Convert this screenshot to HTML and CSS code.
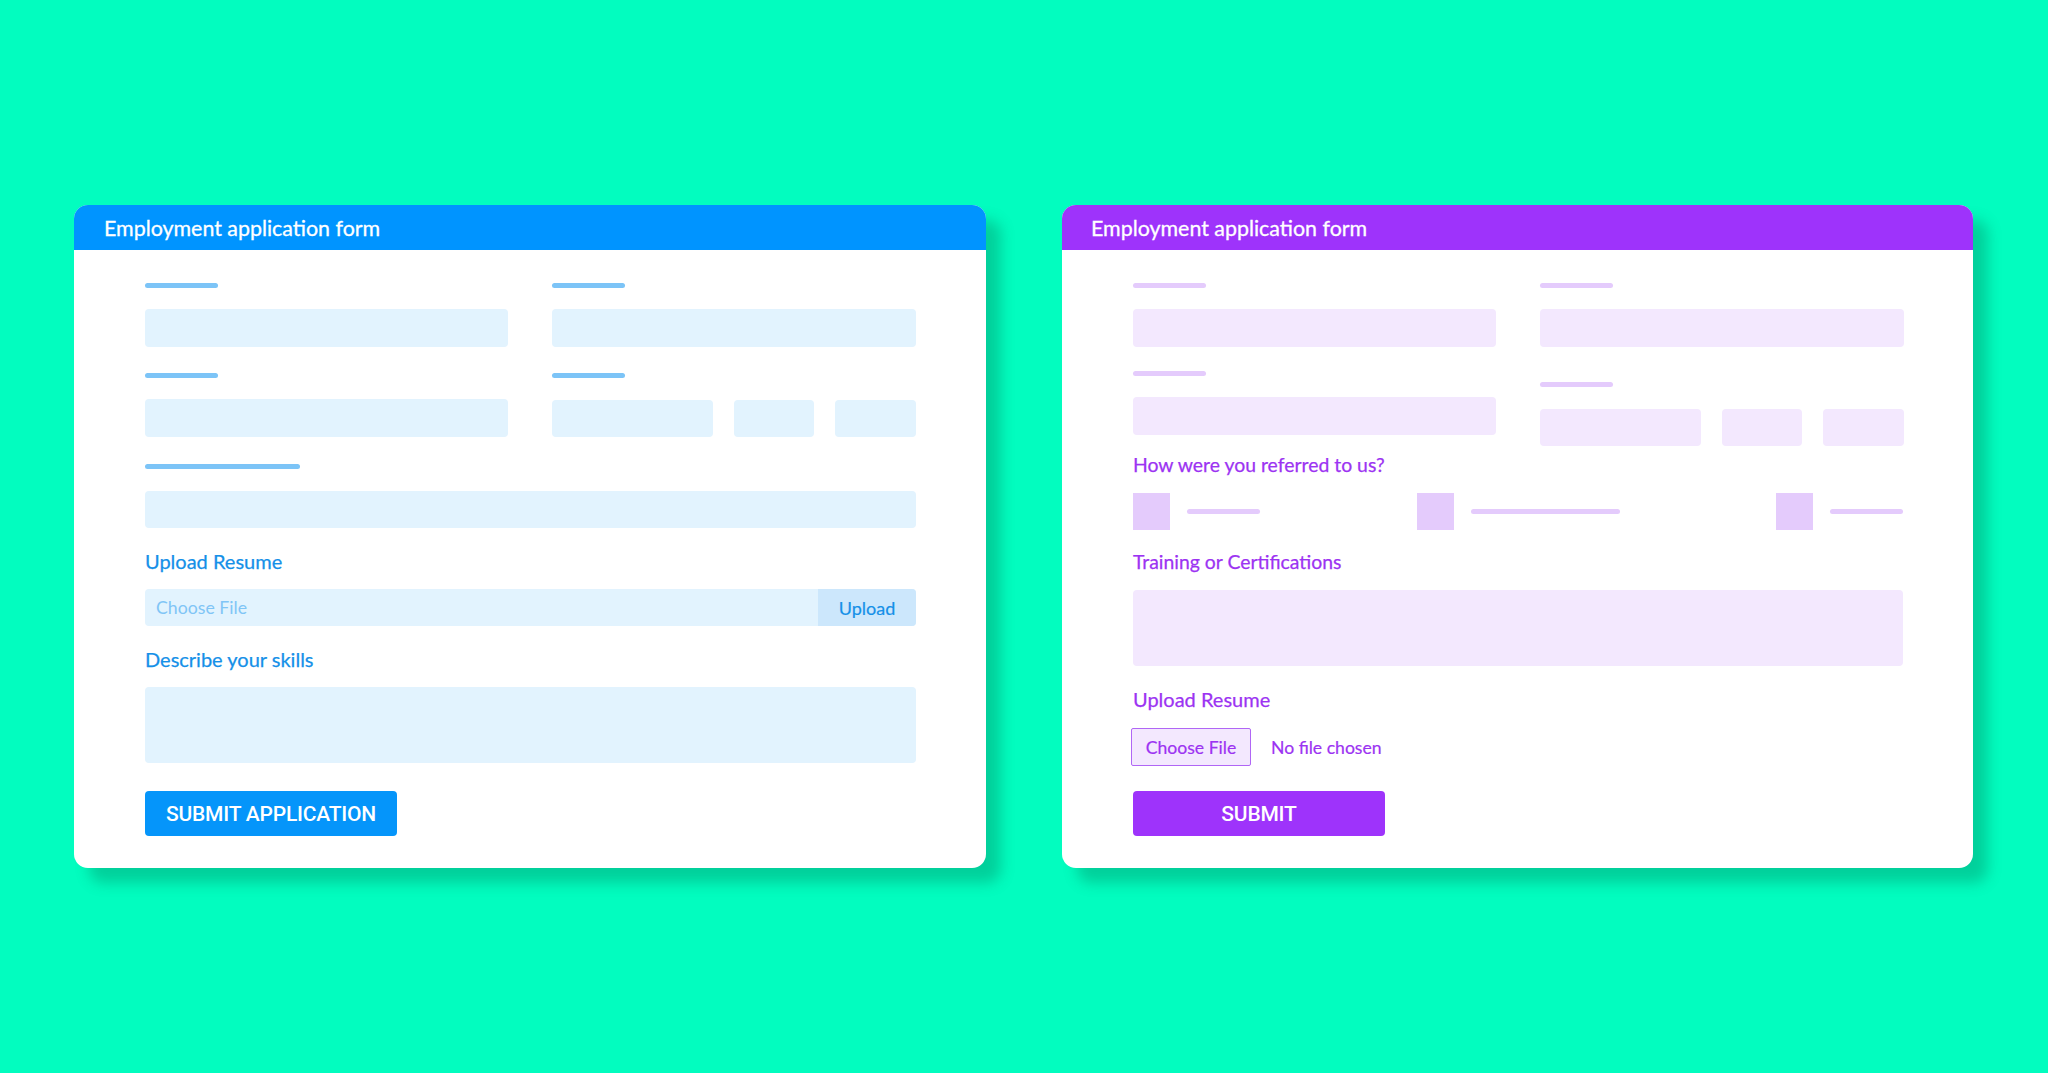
FILE: index.html
```html
<!DOCTYPE html>
<html>
<head>
<meta charset="utf-8">
<link rel="stylesheet" href="styles.css">
</head>
<body>
<div class="stage">
  <section class="card blue">
    <header class="card-head">Employment application form</header>
    <div class="card-body">
      <div class="cols">
        <div class="col">
          <div class="bar"></div>
          <div class="input"></div>
          <div class="bar gap-top"></div>
          <div class="input"></div>
        </div>
        <div class="col">
          <div class="bar"></div>
          <div class="input"></div>
          <div class="bar gap-top"></div>
          <div class="split">
            <div class="input wide"></div>
            <div class="input small"></div>
            <div class="input small"></div>
          </div>
        </div>
      </div>
      <div class="bar long gap-top2"></div>
      <div class="input full"></div>
      <div class="label l1">Upload Resume</div>
      <div class="file">
        <span class="file-text">Choose File</span>
        <span class="file-btn">Upload</span>
      </div>
      <div class="label l2">Describe your skills</div>
      <div class="textarea"></div>
      <button class="submit wide-btn">SUBMIT APPLICATION</button>
    </div>
  </section>

  <section class="card purple">
    <header class="card-head">Employment application form</header>
    <div class="card-body">
      <div class="cols">
        <div class="col">
          <div class="bar"></div>
          <div class="input"></div>
          <div class="bar gap-p1"></div>
          <div class="input"></div>
        </div>
        <div class="col">
          <div class="bar"></div>
          <div class="input"></div>
          <div class="bar gap-p2"></div>
          <div class="split">
            <div class="input wide"></div>
            <div class="input small"></div>
            <div class="input small"></div>
          </div>
        </div>
      </div>
      <div class="label p-l1">How were you referred to us?</div>
      <div class="checks">
        <div class="check"><span class="box"></span><span class="line"></span></div>
        <div class="check"><span class="box"></span><span class="line mid"></span></div>
        <div class="check"><span class="box"></span><span class="line"></span></div>
      </div>
      <div class="label p-l2">Training or Certifications</div>
      <div class="textarea"></div>
      <div class="label p-l3">Upload Resume</div>
      <div class="file-row">
        <span class="choose">Choose File</span>
        <span class="nofile">No file chosen</span>
      </div>
      <button class="submit">SUBMIT</button>
    </div>
  </section>
</div>
</body>
</html>
```

FILE: styles.css
```css
* { box-sizing: border-box; }
html, body { margin: 0; padding: 0; }
body {
  background: #02fdbf;
  width: 2048px;
  height: 1073px;
  overflow: hidden;
  font-family: Lato, "Open Sans", sans-serif;
}
.stage {
  display: flex;
  gap: 76px;
  padding: 205px 0 0 74px;
}
.card {
  width: 912px;
  height: 663px;
  background: #ffffff;
  border-radius: 14px;
  overflow: hidden;
  box-shadow: 15px 15px 14px rgba(0, 90, 60, 0.27);
}
.card.purple { width: 911px; }
.card-head {
  height: 45px;
  display: flex;
  align-items: center;
  padding-left: 30px;
  color: #ffffff;
  font-size: 21.4px;
  -webkit-text-stroke: 0.3px #ffffff;
}
.blue .card-head { background: #0094ff; }
.purple .card-head { background: #9e33fb; padding-left: 29px; }
.card-body {
  padding: 33px 70px 0 71px;
}
.cols {
  display: grid;
  grid-template-columns: 363px 364px;
  column-gap: 44px;
}
.bar {
  width: 73px;
  height: 5px;
  border-radius: 3px;
}
.bar.long { width: 155px; }
.input {
  height: 38px;
  border-radius: 4px;
  margin-top: 21px;
}
.input.full { height: 37px; margin-top: 22px; }
.gap-top { margin-top: 26px; }
.gap-top2 { margin-top: 27px; }
.split {
  display: flex;
  gap: 21px;
  margin-top: 22px;
}
.split .input { margin-top: 0; height: 37px; }
.split .wide { width: 161px; }
.split .small { width: 80px; }
.split .small:last-child { width: 81px; }

.blue .bar { background: #7cc4f7; }
.blue .input, .blue .textarea, .blue .file { background: #e2f3fe; }
.purple .bar { background: #e4cbfc; }
.purple .input, .purple .textarea { background: #f3e8fe; }

.label {
  font-size: 20px;
  line-height: 24px;
  height: 24px;
  -webkit-text-stroke: 0.25px currentColor;
}
.blue .label { color: #1590e8; }
.purple .label { color: #9c33f2; }
.l1 { margin-top: 21px; }
.l2 { margin-top: 21px; }

.file {
  margin-top: 16px;
  height: 37px;
  border-radius: 4px;
  display: flex;
  align-items: stretch;
  overflow: hidden;
}
.file-text {
  flex: 1;
  display: flex;
  align-items: center;
  padding-left: 11px;
  color: #80c5f6;
  font-size: 17.7px;
}
.file-btn {
  width: 98px;
  display: flex;
  align-items: center;
  justify-content: center;
  background: #cce7fc;
  color: #1590e8;
  font-size: 18px;
  -webkit-text-stroke: 0.2px currentColor;
}
.textarea {
  margin-top: 16px;
  height: 76px;
  border-radius: 4px;
}
.submit {
  display: flex;
  align-items: center;
  justify-content: center;
  width: 252px;
  height: 45px;
  border: none;
  border-radius: 4px;
  color: #ffffff;
  font-family: Roboto, sans-serif;
  font-weight: 500;
  font-size: 21px;
  letter-spacing: -0.2px;
  padding: 0;
  margin-top: 28px;
}
.blue .submit { background: #0595fa; }
.purple .submit { background: #9e33fb; margin-top: 25px; }

.gap-p1 { margin-top: 24px; }
.gap-p2 { margin-top: 35px; }

.p-l1 { margin-top: 7px; font-size: 19.4px; }
.checks {
  margin-top: 16px;
  display: flex;
  justify-content: space-between;
  align-items: center;
}
.check {
  display: flex;
  align-items: center;
  gap: 17px;
}
.box {
  width: 37px;
  height: 37px;
  background: #e4cbfc;
}
.line {
  width: 73px;
  height: 5px;
  border-radius: 3px;
  background: #e4cbfc;
}
.line.mid { width: 149px; }
.p-l2 { margin-top: 20px; font-size: 19.4px; }
.p-l3 { margin-top: 21px; }
.file-row {
  margin-top: 17px;
  display: flex;
  align-items: center;
  gap: 20px;
  margin-left: -2px;
}
.choose {
  width: 120px;
  height: 38px;
  display: flex;
  align-items: center;
  justify-content: center;
  border: 1.5px solid #b066f5;
  border-radius: 2px;
  background: #f3e8fe;
  color: #9c33f2;
  font-size: 17.6px;
  -webkit-text-stroke: 0.2px currentColor;
}
.nofile {
  color: #9c33f2;
  font-size: 17.6px;
  -webkit-text-stroke: 0.2px currentColor;
}
```
